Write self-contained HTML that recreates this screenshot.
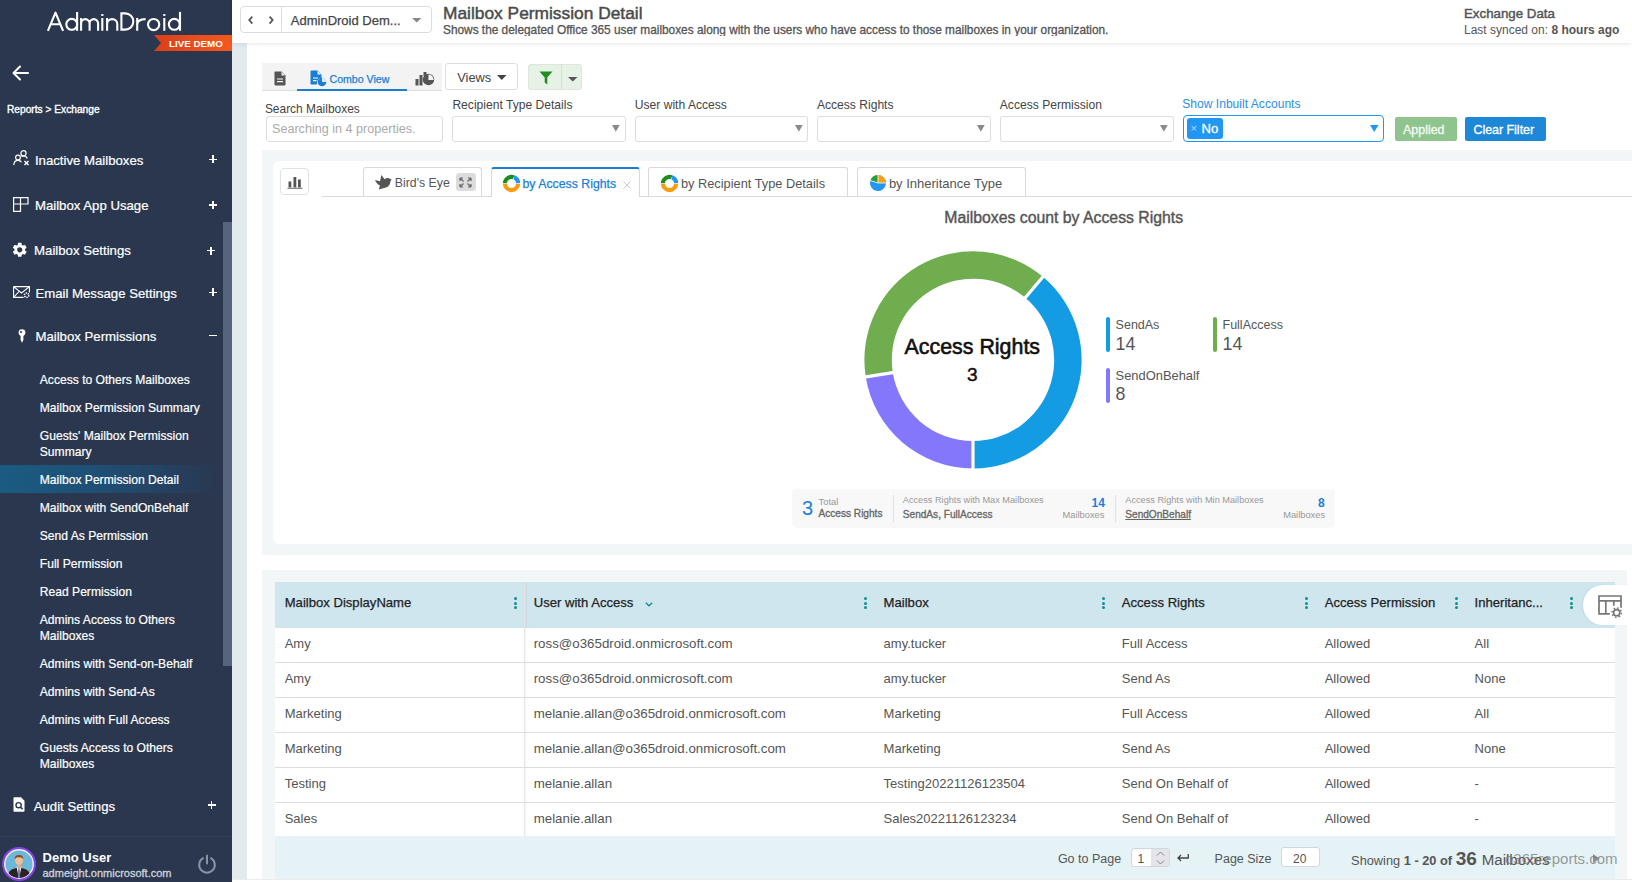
<!DOCTYPE html><html><head><meta charset="utf-8"><style>
*{margin:0;padding:0;box-sizing:border-box}
html,body{width:1632px;height:882px;overflow:hidden;background:#fff;font-family:"Liberation Sans",sans-serif}
.t{position:absolute;white-space:nowrap}
.r{position:absolute}
svg{position:absolute;overflow:visible}
</style></head><body><div class="r" style="left:0px;top:0px;width:232px;height:882px;background:#2a374e"></div>
<div class="r" style="left:0px;top:465px;width:222px;height:28px;background:linear-gradient(90deg,#1b5b82 0%,#1f4f74 45%,#263f5e 80%,#2a374e 100%)"></div>
<div class="r" style="left:223px;top:222px;width:9px;height:444px;background:#56647f"></div>
<svg style="left:0;top:0" width="232" height="40" fill="none" stroke="#fff" stroke-width="2.1" stroke-linejoin="round"><path d="M47.9 30.8 L55.5 12.6 L63.1 30.8 M51.2 24.3 H59.8"/><circle cx="71.75" cy="24.35" r="5.45"/><path d="M77.1 12 V30.8"/><path d="M81.1 18 V30.8 M81.1 23.4 A4.25 4.25 0 0 1 89.6 23.4 V30.8 M89.6 23.4 A4.25 4.25 0 0 1 98.1 23.4 V30.8"/><path d="M102.3 18 V30.8 M107.1 18 V30.8 M107.1 24.2 A5.1 5.1 0 0 1 117.3 24.2 V30.8"/><path d="M121.4 12.2 V30.8 M121.4 13.35 H125.2 A8.15 8.15 0 0 1 125.2 29.65 H121.4"/><path d="M137.2 18 V30.8 M137.2 24.8 Q137.2 19.15 145.6 19.15"/><circle cx="153.65" cy="24.55" r="5.6"/><path d="M164.3 18 V30.8"/><circle cx="174.3" cy="24.35" r="5.45"/><path d="M180 11.9 V30.8"/><rect x="101.15" y="14.1" width="2.3" height="1.8" fill="#fff" stroke="none"/><rect x="163.15" y="14.1" width="2.3" height="1.8" fill="#fff" stroke="none"/></svg>
<svg style="left:154px;top:35px" width="78" height="16"><defs><linearGradient id="rg" x1="0" x2="1"><stop offset="0" stop-color="#d9401a"/><stop offset="1" stop-color="#f5591f"/></linearGradient></defs><polygon points="0,0 78,0 78,16 0,16 7,8" fill="url(#rg)"/></svg>
<div class="t " style="left:169.00px;top:39px;font-size:9.8px;line-height:9.8px;color:#fff;font-weight:700">LIVE DEMO</div>
<svg style="left:12px;top:65px" width="17" height="16"><path d="M8 1.5 L1.5 8 L8 14.5 M1.5 8 H16" stroke="#fff" stroke-width="2" fill="none" stroke-linecap="round" stroke-linejoin="round"/></svg>
<div class="t " style="left:7.00px;top:105px;font-size:10.2px;line-height:10.2px;color:#fff;-webkit-text-stroke:0.35px #fff">Reports &gt; Exchange</div>
<div class="t " style="left:34.90px;top:154px;font-size:13.2px;line-height:13.2px;color:#fff;-webkit-text-stroke:0.2px #fff">Inactive Mailboxes</div>
<div class="t " style="left:34.90px;top:199px;font-size:13.2px;line-height:13.2px;color:#fff;-webkit-text-stroke:0.2px #fff">Mailbox App Usage</div>
<div class="t " style="left:34.10px;top:244px;font-size:13.2px;line-height:13.2px;color:#fff;-webkit-text-stroke:0.2px #fff">Mailbox Settings</div>
<div class="t " style="left:35.40px;top:287px;font-size:13.2px;line-height:13.2px;color:#fff;-webkit-text-stroke:0.2px #fff">Email Message Settings</div>
<div class="t " style="left:35.40px;top:330px;font-size:13.2px;line-height:13.2px;color:#fff;-webkit-text-stroke:0.2px #fff">Mailbox Permissions</div>
<div class="t " style="left:33.70px;top:800px;font-size:13.2px;line-height:13.2px;color:#fff;-webkit-text-stroke:0.2px #fff">Audit Settings</div>
<div class="r" style="left:208.8px;top:158.65px;width:8px;height:1.5px;background:#fff"></div>
<div class="r" style="left:212.05px;top:155.4px;width:1.5px;height:8px;background:#fff"></div>
<div class="r" style="left:208.8px;top:204.25px;width:8px;height:1.5px;background:#fff"></div>
<div class="r" style="left:212.05px;top:201px;width:1.5px;height:8px;background:#fff"></div>
<div class="r" style="left:207.2px;top:249.75px;width:8px;height:1.5px;background:#fff"></div>
<div class="r" style="left:210.45px;top:246.5px;width:1.5px;height:8px;background:#fff"></div>
<div class="r" style="left:208.8px;top:291.65px;width:8px;height:1.5px;background:#fff"></div>
<div class="r" style="left:212.05px;top:288.4px;width:1.5px;height:8px;background:#fff"></div>
<div class="r" style="left:207.7px;top:804.25px;width:8px;height:1.5px;background:#fff"></div>
<div class="r" style="left:210.95px;top:801px;width:1.5px;height:8px;background:#fff"></div>
<div class="r" style="left:208.7px;top:335px;width:8px;height:1.3px;background:#fff"></div>
<svg style="left:13px;top:150px" width="17" height="16" viewBox="0 0 17 16" fill="none" stroke="#fff" stroke-width="1.2"><circle cx="10.5" cy="3.3" r="2.6"/><circle cx="5" cy="7.5" r="2.4"/><path d="M0.8 15 C1 11.5 3 10.3 5 10.3 C6.5 10.3 7.8 11 8.5 12.3"/><path d="M8.5 6.5 C9 6 9.8 5.9 10.5 5.9 C12.3 5.9 13.7 7 14.2 8.5"/><path d="M11.5 11 L15.5 15 M15.5 11 L11.5 15" stroke-width="1.5"/></svg>
<svg style="left:12.5px;top:196.5px" width="16" height="15" viewBox="0 0 16 15" fill="none" stroke="#fff" stroke-width="1.2"><path d="M0.6 0.6 H15 V7 H7.5 V14.4 H0.6 Z M7.5 0.6 V7 M0.6 7 H7.5"/></svg>
<svg style="left:10.9px;top:241px" width="17.5" height="17.5" viewBox="0 0 24 24"><path fill="#fff" d="M19.14 12.94c.04-.3.06-.61.06-.94s-.02-.64-.07-.94l2.03-1.58a.49.49 0 0 0 .12-.61l-1.92-3.32a.49.49 0 0 0-.59-.22l-2.39.96c-.5-.38-1.03-.7-1.62-.94l-.36-2.54a.48.48 0 0 0-.48-.41h-3.84c-.24 0-.43.17-.47.41l-.36 2.54c-.59.24-1.13.57-1.62.94l-2.39-.96a.48.48 0 0 0-.59.22L2.74 8.87c-.12.21-.08.47.12.61l2.03 1.58c-.05.3-.09.63-.09.94s.02.64.07.94l-2.03 1.58a.49.49 0 0 0-.12.61l1.92 3.32c.12.22.37.29.59.22l2.39-.96c.5.38 1.03.7 1.62.94l.36 2.54c.05.24.24.41.48.41h3.84c.24 0 .44-.17.47-.41l.36-2.54c.59-.24 1.13-.56 1.62-.94l2.39.96c.22.08.47 0 .59-.22l1.92-3.32c.12-.22.07-.47-.12-.61l-2.01-1.58zM12 15.6c-1.98 0-3.6-1.62-3.6-3.6s1.62-3.6 3.6-3.6 3.6 1.62 3.6 3.6-1.62 3.6-3.6 3.6z"/></svg>
<svg style="left:12.5px;top:286px" width="17" height="12" viewBox="0 0 17 12" fill="none" stroke="#fff" stroke-width="1.1"><path d="M0.6 0.6 H16.4 V6.5 M0.6 0.6 V11.4 H10.5 M0.6 0.6 L8.5 7 L16.4 0.6 M0.6 11.4 L6 5.5"/><circle cx="13.6" cy="9.2" r="2.2" stroke-width="1.6" stroke-dasharray="1.2 0.9"/></svg>
<svg style="left:16.5px;top:328.5px" width="10" height="14" viewBox="0 0 10 14"><circle cx="5" cy="3.6" r="3.4" fill="#fff"/><path d="M3.6 6 H6.4 V11 L5 13.8 L3.6 11 Z" fill="#fff"/><circle cx="4" cy="3" r="1" fill="#2a374e"/></svg>
<svg style="left:12.5px;top:797px" width="12" height="15" viewBox="0 0 12 15"><path d="M0.5 1 Q0.5 0.3 1.2 0.3 H8 L11.5 3.8 V14 Q11.5 14.7 10.8 14.7 H1.2 Q0.5 14.7 0.5 14 Z" fill="#fff"/><circle cx="5.6" cy="8.2" r="2.6" fill="none" stroke="#2a374e" stroke-width="1.4"/><path d="M7.4 10 L9.6 12.2" stroke="#2a374e" stroke-width="1.6"/></svg>
<div class="t " style="left:39.80px;top:374px;font-size:12.1px;line-height:12.1px;color:#fff;-webkit-text-stroke:0.2px #fff">Access to Others Mailboxes</div>
<div class="t " style="left:39.80px;top:402px;font-size:12.1px;line-height:12.1px;color:#fff;-webkit-text-stroke:0.2px #fff">Mailbox Permission Summary</div>
<div class="t " style="left:39.80px;top:430px;font-size:12.1px;line-height:12.1px;color:#fff;-webkit-text-stroke:0.2px #fff">Guests' Mailbox Permission</div>
<div class="t " style="left:39.80px;top:446px;font-size:12.1px;line-height:12.1px;color:#fff;-webkit-text-stroke:0.2px #fff">Summary</div>
<div class="t " style="left:39.80px;top:474px;font-size:12.1px;line-height:12.1px;color:#fff;-webkit-text-stroke:0.2px #fff">Mailbox Permission Detail</div>
<div class="t " style="left:39.80px;top:502px;font-size:12.1px;line-height:12.1px;color:#fff;-webkit-text-stroke:0.2px #fff">Mailbox with SendOnBehalf</div>
<div class="t " style="left:39.80px;top:530px;font-size:12.1px;line-height:12.1px;color:#fff;-webkit-text-stroke:0.2px #fff">Send As Permission</div>
<div class="t " style="left:39.80px;top:558px;font-size:12.1px;line-height:12.1px;color:#fff;-webkit-text-stroke:0.2px #fff">Full Permission</div>
<div class="t " style="left:39.80px;top:586px;font-size:12.1px;line-height:12.1px;color:#fff;-webkit-text-stroke:0.2px #fff">Read Permission</div>
<div class="t " style="left:39.80px;top:614px;font-size:12.1px;line-height:12.1px;color:#fff;-webkit-text-stroke:0.2px #fff">Admins Access to Others</div>
<div class="t " style="left:39.80px;top:630px;font-size:12.1px;line-height:12.1px;color:#fff;-webkit-text-stroke:0.2px #fff">Mailboxes</div>
<div class="t " style="left:39.80px;top:658px;font-size:12.1px;line-height:12.1px;color:#fff;-webkit-text-stroke:0.2px #fff">Admins with Send-on-Behalf</div>
<div class="t " style="left:39.80px;top:686px;font-size:12.1px;line-height:12.1px;color:#fff;-webkit-text-stroke:0.2px #fff">Admins with Send-As</div>
<div class="t " style="left:39.80px;top:714px;font-size:12.1px;line-height:12.1px;color:#fff;-webkit-text-stroke:0.2px #fff">Admins with Full Access</div>
<div class="t " style="left:39.80px;top:742px;font-size:12.1px;line-height:12.1px;color:#fff;-webkit-text-stroke:0.2px #fff">Guests Access to Others</div>
<div class="t " style="left:39.80px;top:758px;font-size:12.1px;line-height:12.1px;color:#fff;-webkit-text-stroke:0.2px #fff">Mailboxes</div>
<div class="r" style="left:0px;top:836px;width:232px;height:1px;background:#34425a"></div>
<svg style="left:0;top:838px" width="40" height="44" viewBox="0 0 40 44"><defs><clipPath id="av"><circle cx="19" cy="26" r="14"/></clipPath></defs><circle cx="19" cy="26" r="16" fill="none" stroke="#8b3ef0" stroke-width="2"/><circle cx="19" cy="26" r="14.3" fill="#6db8d9" stroke="#f2f2f2" stroke-width="1.4"/><g clip-path="url(#av)"><path d="M6 44 Q7 32 14.5 30.5 L19 29.5 L23.5 30.5 Q31 32 32 44 Z" fill="#2a2224"/><path d="M16.5 28.5 L19 41 L21.5 28.5 Z" fill="#f4f4f4"/><path d="M18.3 30 H19.7 L20.2 40 L19 42 L17.8 40 Z" fill="#6a78b0"/><path d="M17 25 H21 V29.5 L19 31 L17 29.5Z" fill="#e0a883"/><ellipse cx="19" cy="22.2" rx="4" ry="4.6" fill="#f1bf95"/><path d="M14.8 21.5 Q14.3 16.8 19 16.9 Q23.7 16.8 23.2 21.5 Q22.5 19 19 19.2 Q15.5 19 14.8 21.5Z" fill="#8a4b2a"/></g></svg>
<div class="t " style="left:42.60px;top:851px;font-size:13px;line-height:13px;color:#fff;font-weight:700">Demo User</div>
<div class="t " style="left:42.50px;top:868px;font-size:11px;line-height:11px;color:#cfd4dc;-webkit-text-stroke:0.3px #cfd4dc">admeight.onmicrosoft.com</div>
<svg style="left:197px;top:854px" width="20" height="20" viewBox="0 0 20 20" fill="none" stroke="#8a93a3" stroke-width="2" stroke-linecap="round"><path d="M6 4.2 A7.8 7.8 0 1 0 14 4.2"/><path d="M10 1.5 V9.5"/></svg>
<div class="r" style="left:232px;top:43px;width:15px;height:839px;background:#e3eaed"></div>
<div class="r" style="left:232px;top:0px;width:1400px;height:43px;background:#fff;box-shadow:0 1px 4px rgba(0,0,0,0.10);z-index:2"></div>
<div class="r" style="left:240px;top:6px;width:191.5px;height:26.5px;border:1px solid #dcdcdc;border-radius:4px;background:#fff;z-index:3"></div>
<div class="r" style="left:281.2px;top:6px;width:1px;height:26.5px;background:#dcdcdc;z-index:3"></div>
<svg style="left:247px;top:14px;z-index:4" width="30" height="12" viewBox="0 0 30 12" fill="none" stroke="#555" stroke-width="1.7"><path d="M5.3 2.6 L2.2 6.1 L5.3 9.6"/><path d="M22.6 2.6 L25.7 6.1 L22.6 9.6"/></svg>
<div class="t " style="left:290.80px;top:14px;font-size:13px;line-height:13px;color:#444;-webkit-text-stroke:0.25px #444;z-index:4">AdminDroid Dem...</div>
<svg style="left:412px;top:18px;z-index:4" width="10" height="5"><polygon points="0,0 9.5,0 4.75,4.5" fill="#888"/></svg>
<div class="t " style="left:443.00px;top:5px;font-size:17.35px;line-height:17.35px;color:#4a4a4a;-webkit-text-stroke:0.45px #4a4a4a;z-index:4">Mailbox Permission Detail</div>
<div class="t " style="left:443.00px;top:25px;font-size:11.85px;line-height:11.85px;color:#555;-webkit-text-stroke:0.3px #555;z-index:4;height:11px;overflow:hidden">Shows the delegated Office 365 user mailboxes along with the users who have access to those mailboxes in your organization.</div>
<div class="t " style="left:1464.00px;top:7px;font-size:13.3px;line-height:13.3px;color:#555;-webkit-text-stroke:0.45px #555;z-index:4">Exchange Data</div>
<div class="t " style="left:1464.00px;top:24px;font-size:12px;line-height:12px;color:#555;z-index:4">Last synced on: <b>8 hours ago</b></div>
<div class="r" style="left:262px;top:63px;width:180px;height:28px;background:#f3f3f3;border-bottom:1px solid #ddd"></div>
<div class="r" style="left:297px;top:89px;width:110px;height:2px;background:#1a7fd4"></div>
<svg style="left:274px;top:70.5px" width="12" height="15" viewBox="0 0 12 15"><path d="M1.2 0.5 H7.5 L11.5 4.5 V13.5 Q11.5 14.5 10.5 14.5 H1.5 Q0.5 14.5 0.5 13.5 V1.5 Q0.5 0.5 1.2 0.5Z" fill="#555"/><path d="M7.5 0.8 V4.5 H11.2Z" fill="#fff" opacity="0.9"/><path d="M3 8 H9 M3 10.7 H9" stroke="#fff" stroke-width="1.2"/></svg>
<svg style="left:310px;top:70px" width="17" height="17" viewBox="0 0 17 17"><path d="M1.2 0.5 H7.5 L11.5 4.5 V8 A5 5 0 0 0 7 14.5 H1.5 Q0.5 14.5 0.5 13.5 V1.5 Q0.5 0.5 1.2 0.5Z" fill="#1a7fd4"/><path d="M7.5 0.8 V4.5 H11.2Z" fill="#fff" opacity="0.9"/><path d="M3 8 H8 M3 10.7 H6.5" stroke="#fff" stroke-width="1.2"/><circle cx="12" cy="12" r="4.3" fill="#1a7fd4"/><path d="M12 12 V7.7 A4.3 4.3 0 0 1 16.3 12 Z" fill="#fff" opacity="0.85"/></svg>
<div class="t " style="left:329.50px;top:74px;font-size:10.6px;line-height:10.6px;color:#1a7fd4;-webkit-text-stroke:0.25px #1a7fd4">Combo View</div>
<svg style="left:415px;top:71px" width="20" height="15" viewBox="0 0 20 15"><rect x="0.5" y="8" width="3" height="6.5" fill="#555"/><rect x="4.5" y="4" width="3" height="10.5" fill="#555"/><rect x="8.5" y="1" width="3" height="4" fill="#555"/><circle cx="13.5" cy="8.5" r="5.7" fill="#555"/><path d="M13.5 8.5 V3.5 A5 5 0 0 1 18.5 8.5Z" fill="#f3f3f3"/><path d="M13.5 8.5 H18.5" stroke="#f3f3f3" stroke-width="1"/></svg>
<div class="r" style="left:445.3px;top:63.3px;width:73px;height:27.2px;border:1px solid #ddd;border-radius:3px;background:#fff"></div>
<div class="t " style="left:457.30px;top:72px;font-size:12.8px;line-height:12.8px;color:#444">Views</div>
<svg style="left:497px;top:75px" width="10" height="6"><polygon points="0,0 9.5,0 4.75,5" fill="#444"/></svg>
<div class="r" style="left:528.2px;top:64.2px;width:53.6px;height:26.3px;border:1px solid #dbe8db;border-radius:3px;background:#e7f2e7"></div>
<div class="r" style="left:561.3px;top:64.2px;width:1px;height:26.3px;background:#d3e0d3"></div>
<svg style="left:539px;top:71px" width="14" height="14" viewBox="0 0 14 14"><path d="M0.5 0.5 H13.5 L8.3 6.5 V13.5 L5.7 11.5 V6.5 Z" fill="#238c23"/></svg>
<svg style="left:568px;top:77px" width="10" height="5"><polygon points="0,0 9.5,0 4.75,4.5" fill="#555"/></svg>
<div class="t " style="left:264.90px;top:104px;font-size:11.95px;line-height:11.95px;color:#444">Search Mailboxes</div>
<div class="r" style="left:265.5px;top:116px;width:177px;height:26px;border:1px solid #ddd;border-radius:3px;background:#fff"></div>
<div class="t " style="left:272.00px;top:123px;font-size:12.6px;line-height:12.6px;color:#aaa">Searching in 4 properties.</div>
<div class="t " style="left:452.40px;top:99px;font-size:12.1px;line-height:12.1px;color:#444">Recipient Type Details</div>
<div class="r" style="left:452.3px;top:116px;width:173.4px;height:26px;border:1px solid #ddd;border-radius:3px;background:#fff"></div>
<svg style="left:612.3px;top:125px" width="8" height="7"><polygon points="0,0 7.7,0 3.85,6.7" fill="#8a8a8a"/></svg>
<div class="t " style="left:634.80px;top:99px;font-size:12.1px;line-height:12.1px;color:#444">User with Access</div>
<div class="r" style="left:635px;top:116px;width:173.4px;height:26px;border:1px solid #ddd;border-radius:3px;background:#fff"></div>
<svg style="left:795px;top:125px" width="8" height="7"><polygon points="0,0 7.7,0 3.85,6.7" fill="#8a8a8a"/></svg>
<div class="t " style="left:816.90px;top:99px;font-size:12.1px;line-height:12.1px;color:#444">Access Rights</div>
<div class="r" style="left:817.4px;top:116px;width:173.4px;height:26px;border:1px solid #ddd;border-radius:3px;background:#fff"></div>
<svg style="left:977.4px;top:125px" width="8" height="7"><polygon points="0,0 7.7,0 3.85,6.7" fill="#8a8a8a"/></svg>
<div class="t " style="left:999.80px;top:99px;font-size:12.1px;line-height:12.1px;color:#444">Access Permission</div>
<div class="r" style="left:1000.3px;top:116px;width:173.4px;height:26px;border:1px solid #ddd;border-radius:3px;background:#fff"></div>
<svg style="left:1160.3px;top:125px" width="8" height="7"><polygon points="0,0 7.7,0 3.85,6.7" fill="#8a8a8a"/></svg>
<div class="t " style="left:1182.20px;top:98px;font-size:12.1px;line-height:12.1px;color:#2d8ee0">Show Inbuilt Accounts</div>
<div class="r" style="left:1183.3px;top:115.2px;width:200.5px;height:26.4px;border:1.5px solid #2196f3;border-radius:4px;background:#fff"></div>
<div class="r" style="left:1187px;top:118.3px;width:36px;height:20.4px;background:#2196f3;border-radius:3px"></div>
<div class="t " style="left:1190.50px;top:123px;font-size:11px;line-height:11px;color:#b8dcf8">&times;</div>
<div class="t " style="left:1201.50px;top:122px;font-size:13px;line-height:13px;color:#fff;-webkit-text-stroke:0.3px #fff">No</div>
<svg style="left:1369.5px;top:124.6px" width="9" height="7"><polygon points="0,0 8.5,0 4.25,7" fill="#2196f3"/></svg>
<div class="r" style="left:1395px;top:117px;width:61.8px;height:23.7px;background:#8fc48f;border-radius:2px"></div>
<div class="t " style="left:1403.10px;top:124px;font-size:12.4px;line-height:12.4px;color:#f4fbf4;-webkit-text-stroke:0.3px #f4fbf4">Applied</div>
<div class="r" style="left:1465px;top:117px;width:81px;height:23.7px;background:#1e88d8;border-radius:2px"></div>
<div class="t " style="left:1473.50px;top:124px;font-size:12.4px;line-height:12.4px;color:#fff;-webkit-text-stroke:0.3px #fff">Clear Filter</div>
<div class="r" style="left:262px;top:150px;width:1370px;height:405px;background:#f3f6f7"></div>
<div class="r" style="left:273px;top:160.5px;width:1359px;height:383.5px;background:#fff;border-radius:6px 0 0 6px"></div>
<div class="r" style="left:280.2px;top:168.3px;width:29.2px;height:27.2px;border:1px solid #e2e2e2;border-radius:4px;background:#fff"></div>
<svg style="left:287px;top:174px" width="16" height="16" viewBox="0 0 16 16"><rect x="1.5" y="7.5" width="2.8" height="6" fill="#555"/><rect x="6.5" y="3" width="2.8" height="10.5" fill="#555"/><rect x="11" y="5.5" width="2.8" height="8" fill="#555"/><rect x="0.5" y="13.7" width="15" height="1.3" fill="#888"/></svg>
<div class="r" style="left:322px;top:196px;width:1310px;height:1px;background:#d9d9d9"></div>
<div class="r" style="left:362.5px;top:167.3px;width:119.10000000000002px;height:29px;background:#fff;border:1px solid #d9d9d9;border-bottom:none;border-radius:3px 3px 0 0"></div>
<div class="r" style="left:490.7px;top:166.7px;width:149.09999999999997px;height:30.3px;background:#fff;border:1px solid #d9d9d9;border-bottom:none;border-top:2px solid #1a7fd4;border-radius:3px 3px 0 0"></div>
<div class="r" style="left:647.8px;top:167.3px;width:199.9000000000001px;height:29px;background:#fff;border:1px solid #d9d9d9;border-bottom:none;border-radius:3px 3px 0 0"></div>
<div class="r" style="left:856.5px;top:167.3px;width:169.0999999999999px;height:29px;background:#fff;border:1px solid #d9d9d9;border-bottom:none;border-radius:3px 3px 0 0"></div>
<svg style="left:375px;top:175px" width="17" height="15" viewBox="0 0 17 15"><path d="M0 5 L5 6.3 L6.4 0 L9.6 4.3 Q11.2 2.7 13.3 3 L16.6 4.4 L15.4 6.4 Q15 11 11 12.6 L3.8 14.6 L5 10.6 Q1.8 9.4 0 5 Z" fill="#555"/></svg>
<div class="t " style="left:394.80px;top:177px;font-size:12.3px;line-height:12.3px;color:#555">Bird's Eye</div>
<div class="r" style="left:456px;top:173px;width:19.5px;height:17.6px;background:#dcdcdc;border-radius:3px"></div>
<svg style="left:459px;top:176.5px" width="13" height="11" viewBox="0 0 13 11" fill="none" stroke="#666" stroke-width="1.2"><path d="M1 1 L4.5 4.5 M1 1 H4 M1 1 V4 M12 1 L8.5 4.5 M12 1 H9 M12 1 V4 M1 10 L4.5 6.5 M1 10 H4 M1 10 V7 M12 10 L8.5 6.5 M12 10 H9 M12 10 V7"/></svg>
<svg style="left:503px;top:175px" width="17" height="17" viewBox="0 0 17 17" fill="none" stroke-width="4.1"><path d="M10.76 2.30 A6.6 6.6 0 0 1 15.10 8.50" stroke="#1e96f3"/><path d="M15.10 8.50 A6.6 6.6 0 1 1 1.90 8.50" stroke="#f89c0e"/><path d="M1.90 8.50 A6.6 6.6 0 0 1 10.76 2.30" stroke="#1e8c1e"/><path d="M10.76 2.30 L8.5 8.5 M0 8.5 H17" stroke="#fff" stroke-width="0.6"/></svg>
<div class="t " style="left:522.50px;top:178px;font-size:12.3px;line-height:12.3px;color:#1a7fd4;-webkit-text-stroke:0.25px #1a7fd4">by Access Rights</div>
<svg style="left:623px;top:181px" width="8" height="8" fill="none" stroke="#c8c8c8" stroke-width="1"><path d="M0.5 0.5 L7.5 7.5 M7.5 0.5 L0.5 7.5"/></svg>
<svg style="left:661px;top:174.5px" width="17" height="17" viewBox="0 0 17 17" fill="none" stroke-width="4.1"><path d="M10.76 2.30 A6.6 6.6 0 0 1 15.10 8.50" stroke="#1e96f3"/><path d="M15.10 8.50 A6.6 6.6 0 1 1 1.90 8.50" stroke="#f89c0e"/><path d="M1.90 8.50 A6.6 6.6 0 0 1 10.76 2.30" stroke="#1e8c1e"/><path d="M10.76 2.30 L8.5 8.5 M0 8.5 H17" stroke="#fff" stroke-width="0.6"/></svg>
<div class="t " style="left:680.90px;top:178px;font-size:12.8px;line-height:12.8px;color:#555">by Recipient Type Details</div>
<svg style="left:868.5px;top:174px" width="18" height="18" viewBox="0 0 18 18"><path d="M9 9 V1 A8 8 0 1 1 1.4 6.5 Z" fill="#2196f3"/><path d="M9 9 V1 A8 8 0 0 1 17 9 Z" fill="#f5a01a"/><path d="M9 9 L1.4 6.5 A8 8 0 0 1 9 1 Z" fill="#2e9a3a"/><path d="M9 9 V1 M9 9 H17 M9 9 L1.4 6.5" stroke="#fff" stroke-width="0.8"/></svg>
<div class="t " style="left:888.90px;top:177px;font-size:13px;line-height:13px;color:#555">by Inheritance Type</div>
<div class="t " style="left:944.30px;top:210px;font-size:15.8px;line-height:15.8px;color:#555;-webkit-text-stroke:0.4px #555">Mailboxes count by Access Rights</div>
<svg style="left:0;top:0" width="1632" height="882"><path d="M1042.95 276.83 A108.6 108.6 0 0 1 973.00 468.50 L973.00 441.10 A81.2 81.2 0 0 0 1025.30 297.79 Z" fill="#139be3"/><path d="M973.00 468.50 A108.6 108.6 0 0 1 865.74 376.89 L892.80 372.60 A81.2 81.2 0 0 0 973.00 441.10 Z" fill="#8378fb"/><path d="M865.74 376.89 A108.6 108.6 0 0 1 1042.95 276.83 L1025.30 297.79 A81.2 81.2 0 0 0 892.80 372.60 Z" fill="#6fad4f"/><path d="M1023.37 300.08 L1044.88 274.53" stroke="#fff" stroke-width="3.2"/><path d="M973.00 438.10 L973.00 471.50" stroke="#fff" stroke-width="3.2"/><path d="M895.76 372.13 L862.77 377.36" stroke="#fff" stroke-width="3.2"/></svg>
<div class="t " style="left:904.50px;top:337px;font-size:21.4px;line-height:21.4px;color:#111;-webkit-text-stroke:0.6px #111">Access Rights</div>
<div class="t " style="left:967.00px;top:365px;font-size:19px;line-height:19px;color:#111;-webkit-text-stroke:0.45px #111">3</div>
<div class="r" style="left:1106px;top:317px;width:4px;height:34.8px;background:#139be3;border-radius:2px"></div>
<div class="r" style="left:1213px;top:317px;width:4px;height:34.8px;background:#6fad4f;border-radius:2px"></div>
<div class="r" style="left:1106px;top:368.1px;width:4px;height:34.7px;background:#8378fb;border-radius:2px"></div>
<div class="t " style="left:1115.60px;top:319px;font-size:12.5px;line-height:12.5px;color:#555">SendAs</div>
<div class="t " style="left:1115.60px;top:336px;font-size:17.8px;line-height:17.8px;color:#555">14</div>
<div class="t " style="left:1222.50px;top:319px;font-size:12.5px;line-height:12.5px;color:#555">FullAccess</div>
<div class="t " style="left:1222.50px;top:336px;font-size:17.8px;line-height:17.8px;color:#555">14</div>
<div class="t " style="left:1115.60px;top:370px;font-size:12.9px;line-height:12.9px;color:#555">SendOnBehalf</div>
<div class="t " style="left:1115.60px;top:386px;font-size:17.8px;line-height:17.8px;color:#555">8</div>
<div class="r" style="left:792.2px;top:489.4px;width:543.2px;height:38.8px;background:#f8f8f8;border-radius:5px"></div>
<div class="t " style="left:802.00px;top:498px;font-size:20px;line-height:20px;color:#1a7fd4">3</div>
<div class="t " style="left:818.50px;top:497px;font-size:9.4px;line-height:9.4px;color:#999">Total</div>
<div class="t " style="left:818.50px;top:509px;font-size:10.1px;line-height:10.1px;color:#666;-webkit-text-stroke:0.3px #666">Access Rights</div>
<div class="r" style="left:892.5px;top:495px;width:1px;height:27px;background:#e0e0e0"></div>
<div class="t " style="left:902.80px;top:496px;font-size:9.2px;line-height:9.2px;color:#999">Access Rights with Max Mailboxes</div>
<div class="t " style="left:902.80px;top:510px;font-size:10.1px;line-height:10.1px;color:#666;-webkit-text-stroke:0.3px #666">SendAs, FullAccess</div>
<div class="t " style="left:1091.50px;top:497px;font-size:12px;line-height:12px;color:#1a7fd4;font-weight:700">14</div>
<div class="t " style="left:1062.50px;top:511px;font-size:9.3px;line-height:9.3px;color:#999">Mailboxes</div>
<div class="r" style="left:1114.6px;top:495px;width:1px;height:27px;background:#e0e0e0"></div>
<div class="t " style="left:1125.30px;top:496px;font-size:9.2px;line-height:9.2px;color:#999">Access Rights with Min Mailboxes</div>
<div class="t " style="left:1125.30px;top:510px;font-size:10.1px;line-height:10.1px;color:#666;-webkit-text-stroke:0.3px #666"><u>SendOnBehalf</u></div>
<div class="t " style="left:1318.00px;top:497px;font-size:12px;line-height:12px;color:#1a7fd4;font-weight:700">8</div>
<div class="t " style="left:1283.20px;top:511px;font-size:9.3px;line-height:9.3px;color:#999">Mailboxes</div>
<div class="r" style="left:262px;top:570px;width:1365px;height:312px;background:#f3f6f7"></div>
<div class="r" style="left:274.6px;top:581.8px;width:1340.6px;height:46px;background:#cfe6ee"></div>
<div class="r" style="left:274.6px;top:627.6px;width:1340.6px;height:208.3px;background:#fff"></div>
<div class="t " style="left:284.70px;top:637px;font-size:13px;line-height:13px;color:#555">Amy</div>
<div class="t " style="left:533.70px;top:637px;font-size:13.3px;line-height:13.3px;color:#555">ross@o365droid.onmicrosoft.com</div>
<div class="t " style="left:883.60px;top:637px;font-size:13px;line-height:13px;color:#555">amy.tucker</div>
<div class="t " style="left:1121.80px;top:637px;font-size:13px;line-height:13px;color:#555">Full Access</div>
<div class="t " style="left:1324.70px;top:637px;font-size:13px;line-height:13px;color:#555">Allowed</div>
<div class="t " style="left:1474.60px;top:637px;font-size:13px;line-height:13px;color:#555">All</div>
<div class="r" style="left:274.6px;top:662px;width:1340.6px;height:1px;background:#dedede"></div>
<div class="t " style="left:284.70px;top:672px;font-size:13px;line-height:13px;color:#555">Amy</div>
<div class="t " style="left:533.70px;top:672px;font-size:13.3px;line-height:13.3px;color:#555">ross@o365droid.onmicrosoft.com</div>
<div class="t " style="left:883.60px;top:672px;font-size:13px;line-height:13px;color:#555">amy.tucker</div>
<div class="t " style="left:1121.80px;top:672px;font-size:13px;line-height:13px;color:#555">Send As</div>
<div class="t " style="left:1324.70px;top:672px;font-size:13px;line-height:13px;color:#555">Allowed</div>
<div class="t " style="left:1474.60px;top:672px;font-size:13px;line-height:13px;color:#555">None</div>
<div class="r" style="left:274.6px;top:697px;width:1340.6px;height:1px;background:#dedede"></div>
<div class="t " style="left:284.70px;top:707px;font-size:13px;line-height:13px;color:#555">Marketing</div>
<div class="t " style="left:533.70px;top:707px;font-size:13.3px;line-height:13.3px;color:#555">melanie.allan@o365droid.onmicrosoft.com</div>
<div class="t " style="left:883.60px;top:707px;font-size:13px;line-height:13px;color:#555">Marketing</div>
<div class="t " style="left:1121.80px;top:707px;font-size:13px;line-height:13px;color:#555">Full Access</div>
<div class="t " style="left:1324.70px;top:707px;font-size:13px;line-height:13px;color:#555">Allowed</div>
<div class="t " style="left:1474.60px;top:707px;font-size:13px;line-height:13px;color:#555">All</div>
<div class="r" style="left:274.6px;top:732px;width:1340.6px;height:1px;background:#dedede"></div>
<div class="t " style="left:284.70px;top:742px;font-size:13px;line-height:13px;color:#555">Marketing</div>
<div class="t " style="left:533.70px;top:742px;font-size:13.3px;line-height:13.3px;color:#555">melanie.allan@o365droid.onmicrosoft.com</div>
<div class="t " style="left:883.60px;top:742px;font-size:13px;line-height:13px;color:#555">Marketing</div>
<div class="t " style="left:1121.80px;top:742px;font-size:13px;line-height:13px;color:#555">Send As</div>
<div class="t " style="left:1324.70px;top:742px;font-size:13px;line-height:13px;color:#555">Allowed</div>
<div class="t " style="left:1474.60px;top:742px;font-size:13px;line-height:13px;color:#555">None</div>
<div class="r" style="left:274.6px;top:767px;width:1340.6px;height:1px;background:#dedede"></div>
<div class="t " style="left:284.70px;top:777px;font-size:13px;line-height:13px;color:#555">Testing</div>
<div class="t " style="left:533.70px;top:777px;font-size:13.3px;line-height:13.3px;color:#555">melanie.allan</div>
<div class="t " style="left:883.60px;top:777px;font-size:13px;line-height:13px;color:#555">Testing20221126123504</div>
<div class="t " style="left:1121.80px;top:777px;font-size:13px;line-height:13px;color:#555">Send On Behalf of</div>
<div class="t " style="left:1324.70px;top:777px;font-size:13px;line-height:13px;color:#555">Allowed</div>
<div class="t " style="left:1474.60px;top:777px;font-size:13px;line-height:13px;color:#555">-</div>
<div class="r" style="left:274.6px;top:802px;width:1340.6px;height:1px;background:#dedede"></div>
<div class="t " style="left:284.70px;top:812px;font-size:13px;line-height:13px;color:#555">Sales</div>
<div class="t " style="left:533.70px;top:812px;font-size:13.3px;line-height:13.3px;color:#555">melanie.allan</div>
<div class="t " style="left:883.60px;top:812px;font-size:13px;line-height:13px;color:#555">Sales20221126123234</div>
<div class="t " style="left:1121.80px;top:812px;font-size:13px;line-height:13px;color:#555">Send On Behalf of</div>
<div class="t " style="left:1324.70px;top:812px;font-size:13px;line-height:13px;color:#555">Allowed</div>
<div class="t " style="left:1474.60px;top:812px;font-size:13px;line-height:13px;color:#555">-</div>
<div class="r" style="left:523.6px;top:581.8px;width:1.2px;height:254px;background:#e6e6e6;box-shadow:1px 0 3px rgba(0,0,0,0.10)"></div>
<div class="t " style="left:284.70px;top:596px;font-size:13.1px;line-height:13.1px;color:#222;-webkit-text-stroke:0.25px #222">Mailbox DisplayName</div>
<div class="t " style="left:533.70px;top:596px;font-size:13.1px;line-height:13.1px;color:#222;-webkit-text-stroke:0.25px #222">User with Access</div>
<div class="t " style="left:883.60px;top:596px;font-size:13.1px;line-height:13.1px;color:#222;-webkit-text-stroke:0.25px #222">Mailbox</div>
<div class="t " style="left:1121.80px;top:596px;font-size:13.1px;line-height:13.1px;color:#222;-webkit-text-stroke:0.25px #222">Access Rights</div>
<div class="t " style="left:1324.70px;top:596px;font-size:13.1px;line-height:13.1px;color:#222;-webkit-text-stroke:0.25px #222">Access Permission</div>
<div class="t " style="left:1474.60px;top:596px;font-size:13.1px;line-height:13.1px;color:#222;-webkit-text-stroke:0.25px #222">Inheritanc...</div>
<div class="r" style="left:513.6px;top:597.1px;width:3px;height:3px;background:#0e9090;border-radius:50%"></div>
<div class="r" style="left:513.6px;top:601.7px;width:3px;height:3px;background:#0e9090;border-radius:50%"></div>
<div class="r" style="left:513.6px;top:606.3px;width:3px;height:3px;background:#0e9090;border-radius:50%"></div>
<div class="r" style="left:863.7px;top:597.1px;width:3px;height:3px;background:#0e9090;border-radius:50%"></div>
<div class="r" style="left:863.7px;top:601.7px;width:3px;height:3px;background:#0e9090;border-radius:50%"></div>
<div class="r" style="left:863.7px;top:606.3px;width:3px;height:3px;background:#0e9090;border-radius:50%"></div>
<div class="r" style="left:1102.0px;top:597.1px;width:3px;height:3px;background:#0e9090;border-radius:50%"></div>
<div class="r" style="left:1102.0px;top:601.7px;width:3px;height:3px;background:#0e9090;border-radius:50%"></div>
<div class="r" style="left:1102.0px;top:606.3px;width:3px;height:3px;background:#0e9090;border-radius:50%"></div>
<div class="r" style="left:1304.5px;top:597.1px;width:3px;height:3px;background:#0e9090;border-radius:50%"></div>
<div class="r" style="left:1304.5px;top:601.7px;width:3px;height:3px;background:#0e9090;border-radius:50%"></div>
<div class="r" style="left:1304.5px;top:606.3px;width:3px;height:3px;background:#0e9090;border-radius:50%"></div>
<div class="r" style="left:1455.1px;top:597.1px;width:3px;height:3px;background:#0e9090;border-radius:50%"></div>
<div class="r" style="left:1455.1px;top:601.7px;width:3px;height:3px;background:#0e9090;border-radius:50%"></div>
<div class="r" style="left:1455.1px;top:606.3px;width:3px;height:3px;background:#0e9090;border-radius:50%"></div>
<div class="r" style="left:1569.9px;top:597.1px;width:3px;height:3px;background:#0e9090;border-radius:50%"></div>
<div class="r" style="left:1569.9px;top:601.7px;width:3px;height:3px;background:#0e9090;border-radius:50%"></div>
<div class="r" style="left:1569.9px;top:606.3px;width:3px;height:3px;background:#0e9090;border-radius:50%"></div>
<svg style="left:645px;top:601.5px" width="8" height="5" fill="none" stroke="#0e9090" stroke-width="1.3"><path d="M0.8 0.8 L4 3.8 L7.2 0.8"/></svg>
<div class="r" style="left:1583px;top:585px;width:60px;height:40px;background:#fff;border-radius:20px 0 0 20px;box-shadow:-1px 0 2px rgba(0,0,0,0.06)"></div>
<svg style="left:0;top:0;z-index:3" width="1632" height="882" fill="none" stroke="#767676" stroke-width="1.7"><path d="M1599 614.7 V596 H1621 V607.8 M1599 600.8 H1621 M1605.8 600.8 V613.8 M1613.8 600.8 V605.8 M1598.2 613.8 H1609.8"/><circle cx="1616.7" cy="612.7" r="3.1" stroke-width="1.6"/><circle cx="1616.7" cy="612.7" r="4.6" stroke-width="1.6" stroke-dasharray="1.5 2.1"/></svg>
<div class="r" style="left:1627px;top:570px;width:5px;height:312px;background:#fff"></div>
<div class="r" style="left:274.6px;top:835.9px;width:1340.9px;height:42.7px;background:#e5f2f6"></div>
<div class="r" style="left:232px;top:878.6px;width:1400px;height:3.4px;background:#fff;border-top:1px solid #ececec;z-index:5"></div>
<div class="t " style="left:1057.90px;top:853px;font-size:12.5px;line-height:12.5px;color:#555">Go to Page</div>
<div class="r" style="left:1131.3px;top:848.4px;width:38.7px;height:19px;background:#fff;border:1px solid #cfd8dc;border-radius:3px"></div>
<div class="r" style="left:1151px;top:849.4px;width:18px;height:17px;background:#e4e4ea"></div>
<div class="t " style="left:1137.50px;top:853px;font-size:12px;line-height:12px;color:#555">1</div>
<svg style="left:1156px;top:851px" width="9" height="14" fill="none" stroke="#888" stroke-width="1"><path d="M1 4.5 L4.5 1 L8 4.5 M1 9.5 L4.5 13 L8 9.5"/></svg>
<svg style="left:1176.5px;top:854px" width="12" height="8" fill="none" stroke="#444" stroke-width="1.3"><path d="M11.3 0 V4 H1 M4 1 L1 4 L4 7"/></svg>
<div class="t " style="left:1214.60px;top:853px;font-size:12.5px;line-height:12.5px;color:#555">Page Size</div>
<div class="r" style="left:1281.3px;top:847.4px;width:39.1px;height:19.8px;background:#fff;border:1px solid #cfd8dc;border-radius:3px"></div>
<div class="t " style="left:1293.00px;top:853px;font-size:12px;line-height:12px;color:#555">20</div>
<div class="t " style="left:1351.10px;top:855px;font-size:12.8px;line-height:12.8px;color:#555">Showing <b>1 - 20 of</b></div>
<div class="t " style="left:1455.80px;top:849px;font-size:19px;line-height:19px;color:#555;font-weight:700">36</div>
<div class="t " style="left:1481.70px;top:852px;font-size:15.1px;line-height:15.1px;color:#555">Mailboxes</div>
<div class="t " style="left:1505.00px;top:851px;font-size:15px;line-height:15px;color:rgba(120,120,120,0.75)">o365reports.com</div>
<svg style="left:1593px;top:854px" width="7" height="9"><polygon points="0,0 6.5,4.5 0,9" fill="#777" opacity="0.8"/></svg></body></html>
